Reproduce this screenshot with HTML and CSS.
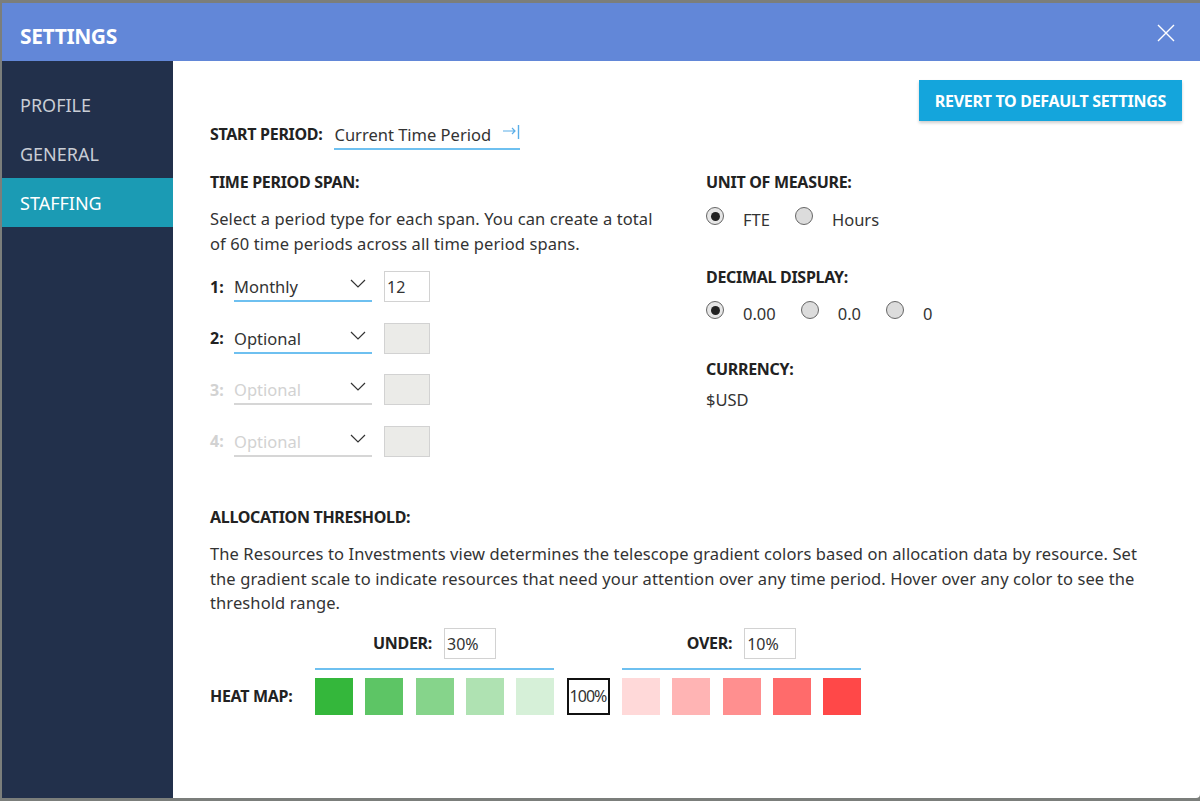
FILE: index.html
```html
<!DOCTYPE html>
<html lang="en">
<head>
  <meta charset="UTF-8">
  <title>Settings</title>
  <link rel="stylesheet" href="styles.css">
</head>
<body>
  <div class="backdrop-strip"></div>

  <div class="modal">
    <div class="modal-header">
      <h1>SETTINGS</h1>
      <svg class="close" width="20" height="20" viewBox="0 0 20 20">
        <path d="M2 2 L18 18 M18 2 L2 18" stroke="#fff" stroke-width="1.4" fill="none"/>
      </svg>
    </div>

    <div class="modal-body">
      <div class="sidebar">
        <a href="#">PROFILE</a>
        <a href="#">GENERAL</a>
        <a href="#" class="active">STAFFING</a>
      </div>

      <div class="content">
        <div class="top-row">
          <button class="revert">REVERT TO DEFAULT SETTINGS</button>
        </div>

        <div class="start-row">
          <span class="label">START PERIOD:</span>
          <div class="start-field">
            <span>Current Time Period</span>
            <svg width="18" height="14" viewBox="0 0 18 14">
              <path d="M1 6 H13 M10 3 L13 6 L10 9" stroke="#5aaee8" stroke-width="1.2" fill="none"/>
              <path d="M16.5 0 V14" stroke="#5aaee8" stroke-width="1.4"/>
            </svg>
          </div>
        </div>

        <div class="columns">
          <div class="col-left">
            <h2>TIME PERIOD SPAN:</h2>
            <p class="span-note">Select a period type for each span. You can create a total of 60 time periods across all time period spans.</p>

            <div class="span-row">
              <span class="num">1:</span>
              <div class="select">
                <span>Monthly</span>
                <svg class="chev" width="16" height="9" viewBox="0 0 16 9"><path d="M1 1 L8 8 L15 1" stroke="#333" stroke-width="1.2" fill="none"/></svg>
              </div>
              <div class="count">12</div>
            </div>
            <div class="span-row">
              <span class="num">2:</span>
              <div class="select">
                <span>Optional</span>
                <svg class="chev" width="16" height="9" viewBox="0 0 16 9"><path d="M1 1 L8 8 L15 1" stroke="#333" stroke-width="1.2" fill="none"/></svg>
              </div>
              <div class="count empty"></div>
            </div>
            <div class="span-row disabled">
              <span class="num">3:</span>
              <div class="select">
                <span>Optional</span>
                <svg class="chev" width="16" height="9" viewBox="0 0 16 9"><path d="M1 1 L8 8 L15 1" stroke="#333" stroke-width="1.2" fill="none"/></svg>
              </div>
              <div class="count empty"></div>
            </div>
            <div class="span-row disabled">
              <span class="num">4:</span>
              <div class="select">
                <span>Optional</span>
                <svg class="chev" width="16" height="9" viewBox="0 0 16 9"><path d="M1 1 L8 8 L15 1" stroke="#333" stroke-width="1.2" fill="none"/></svg>
              </div>
              <div class="count empty"></div>
            </div>
          </div>

          <div class="col-right">
            <h2>UNIT OF MEASURE:</h2>
            <div class="radios">
              <span class="radio checked"></span><span class="radio-label">FTE</span>
              <span class="radio"></span><span class="radio-label">Hours</span>
            </div>

            <h2>DECIMAL DISPLAY:</h2>
            <div class="radios decimals">
              <span class="radio checked"></span><span class="radio-label">0.00</span>
              <span class="radio"></span><span class="radio-label">0.0</span>
              <span class="radio"></span><span class="radio-label">0</span>
            </div>

            <h2>CURRENCY:</h2>
            <div class="currency">$USD</div>
          </div>
        </div>

        <h2 class="alloc-title">ALLOCATION THRESHOLD:</h2>
        <p class="alloc-note">The Resources to Investments view determines the telescope gradient colors based on allocation data by resource. Set the gradient scale to indicate resources that need your attention over any time period. Hover over any color to see the threshold range.</p>

        <div class="heat">
          <div></div>
          <div class="limit">
            <span class="label">UNDER:</span>
            <div class="pct">30%</div>
          </div>
          <div></div>
          <div class="limit">
            <span class="label">OVER:</span>
            <div class="pct">10%</div>
          </div>

          <div></div>
          <div class="rule"></div>
          <div></div>
          <div class="rule"></div>

          <span class="label">HEAT MAP:</span>
          <div class="swatches">
            <span class="sw" style="background:#34b73b"></span>
            <span class="sw" style="background:#5dc565"></span>
            <span class="sw" style="background:#86d48b"></span>
            <span class="sw" style="background:#afe2b2"></span>
            <span class="sw" style="background:#d6f0d8"></span>
          </div>
          <div class="center-box">100%</div>
          <div class="swatches">
            <span class="sw" style="background:#ffd9d9"></span>
            <span class="sw" style="background:#ffb4b4"></span>
            <span class="sw" style="background:#ff8f8f"></span>
            <span class="sw" style="background:#ff6b6b"></span>
            <span class="sw" style="background:#ff4848"></span>
          </div>
        </div>
      </div>
    </div>
  </div>
</body>
</html>
```

FILE: styles.css
```css
body {
  margin: 0;
  background: #7b7e7b;
  font-family: "Noto Sans", "Open Sans", sans-serif;
  color: #333;
  overflow: hidden;
}
.backdrop-strip {
  height: 3px;
}
.modal {
  margin-left: 2px;
  height: 795px;
  display: flex;
  flex-direction: column;
  background: #fff;
  border-bottom-right-radius: 4px;
  overflow: hidden;
}
.modal-header {
  height: 58px;
  flex-shrink: 0;
  box-sizing: border-box;
  background: #6287d8;
  display: flex;
  align-items: center;
  justify-content: space-between;
  padding: 7px 24px 0 18px;
}
.modal-header h1 {
  margin: 0;
  color: #fff;
  font-size: 21px;
  font-weight: bold;
  letter-spacing: -0.4px;
}
.close {
  margin-top: -5px;
}
.modal-body {
  flex: 1;
  display: flex;
}
.sidebar {
  width: 171px;
  background: #22304b;
  padding-top: 19px;
}
.sidebar a {
  display: block;
  height: 49px;
  line-height: 50px;
  padding-left: 18px;
  color: #c9cdd5;
  text-decoration: none;
  font-size: 18px;
}
.sidebar a.active {
  background: #1b9bb4;
  color: #fff;
}
.content {
  flex: 1;
  padding: 19px 18px 0 37px;
}
.top-row {
  display: flex;
  justify-content: flex-end;
}
.revert {
  background: #14a5dc;
  color: #fff;
  border: none;
  height: 41px;
  padding: 0 16px;
  font-family: inherit;
  font-size: 16px;
  font-weight: bold;
  letter-spacing: -0.3px;
  box-shadow: 0 2px 3px rgba(0,0,0,0.2);
}
.label, h2 {
  font-size: 16px;
  font-weight: bold;
  color: #222;
  letter-spacing: -0.3px;
}
.start-row {
  display: flex;
  align-items: flex-end;
  height: 29px;
}
.start-row .label {
  padding-bottom: 5px;
  margin-right: 12px;
}
.start-field {
  width: 186px;
  height: 27px;
  border-bottom: 2px solid #6ec0f0;
  display: flex;
  align-items: center;
  justify-content: space-between;
  font-size: 16.5px;
}
.start-field svg {
  margin-bottom: 6px;
}
h2 {
  margin: 0;
  line-height: 20px;
}
.columns {
  display: flex;
  margin-top: 22px;
}
.col-left {
  width: 496px;
}
.span-note {
  margin: 14px 0 15px;
  font-size: 16.5px;
  letter-spacing: 0.1px;
  line-height: 25px;
  width: 450px;
}
.span-row {
  display: flex;
  align-items: center;
  height: 31px;
  margin-bottom: 20.5px;
}
.num {
  width: 24px;
  font-weight: bold;
  font-size: 16px;
  color: #222;
}
.select {
  width: 138px;
  border-bottom: 2px solid #6ec0f0;
  display: flex;
  align-items: flex-end;
  justify-content: space-between;
  font-size: 16.5px;
  box-sizing: border-box;
  height: 31px;
  padding-bottom: 2px;
}
.chev {
  margin: 0 6px 10px 0;
}
.count {
  margin-left: 12px;
  width: 46px;
  height: 31px;
  box-sizing: border-box;
  border: 1px solid #d2d2d2;
  padding: 4px 0 0 2px;
  font-size: 16px;
}
.count.empty {
  background: #ebebe8;
}
.span-row.disabled .num,
.span-row.disabled .select {
  color: #d2d2d2;
}
.span-row.disabled .select {
  border-bottom-color: #d6d6d6;
}
.radios {
  display: flex;
  align-items: center;
  height: 24px;
  margin: 15px 0 36px;
  font-size: 16.5px;
}
.radios.decimals {
  margin: 14px 0 34px;
}
.radio {
  width: 18px;
  height: 18px;
  border-radius: 50%;
  border: 1px solid #666;
  background: #dcdcdc;
  box-sizing: border-box;
  margin-top: -6px;
  position: relative;
}
.radio.checked {
  background: #e6e6e6;
}
.radio.checked::after {
  content: "";
  position: absolute;
  left: 3.5px;
  top: 3.5px;
  width: 9px;
  height: 9px;
  border-radius: 50%;
  background: #222;
}
.radio-label {
  margin: 0 25px 0 19px;
}
.currency {
  margin-top: 9px;
  font-size: 16.5px;
}
.alloc-title {
  margin-top: 30px;
}
.alloc-note {
  margin: 15px 0 12px;
  font-size: 16.5px;
  letter-spacing: 0.1px;
  line-height: 24.5px;
  width: 950px;
}
.heat {
  display: grid;
  grid-template-columns: 105px 239px 68px 239px;
  align-items: center;
}
.limit {
  display: flex;
  align-items: center;
  justify-content: center;
  height: 31px;
}
.limit .label {
  margin-right: 12px;
}
.pct {
  width: 52px;
  height: 31px;
  box-sizing: border-box;
  border: 1px solid #d2d2d2;
  padding: 4px 0 0 2px;
  font-size: 16px;
}
.rule {
  height: 2px;
  background: #6ec0f0;
  margin: 9px 0 8px;
}
.swatches {
  display: flex;
  justify-content: space-between;
}
.sw {
  width: 38px;
  height: 37px;
}
.center-box {
  justify-self: center;
  width: 43px;
  height: 37px;
  box-sizing: border-box;
  border: 2px solid #111;
  font-size: 16px;
  line-height: 33px;
  text-align: center;
  letter-spacing: -1px;
  white-space: nowrap;
  overflow: hidden;
}
```
